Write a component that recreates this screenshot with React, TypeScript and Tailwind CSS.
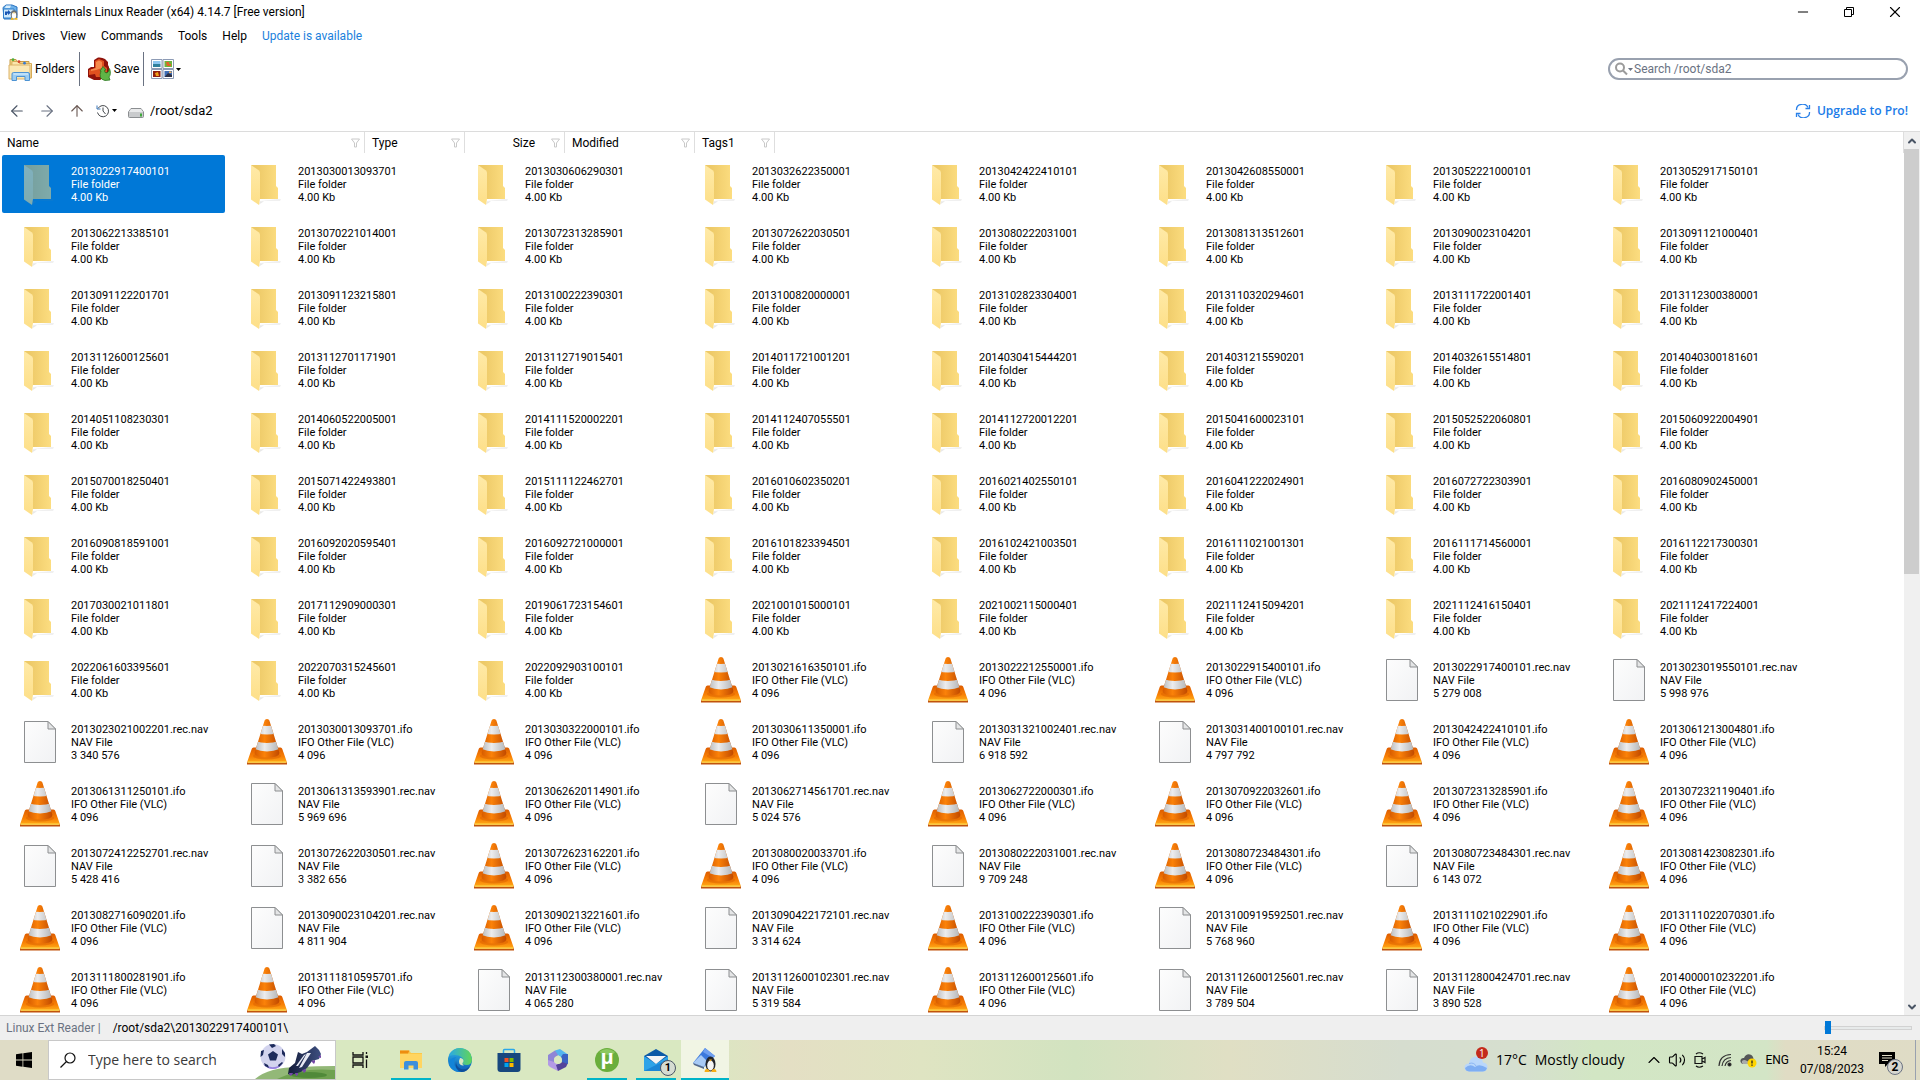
import { ArrowLeft, ArrowRight, ArrowUp, ChevronUp, Minus, Volume2, X } from 'lucide-react';
import type { ReactNode } from 'react';

type Kind = 'folder' | 'ifo' | 'nav';

interface Entry {
    name: string;
    kind: Kind;
    size: string;
}

const folderNames = `
2013022917400101 2013030013093701 2013030606290301 2013032622350001 2013042422410101 2013042608550001 2013052221000101 2013052917150101
2013062213385101 2013070221014001 2013072313285901 2013072622030501 2013080222031001 2013081313512601 2013090023104201 2013091121000401
2013091122201701 2013091123215801 2013100222390301 2013100820000001 2013102823304001 2013110320294601 2013111722001401 2013112300380001
2013112600125601 2013112701171901 2013112719015401 2014011721001201 2014030415444201 2014031215590201 2014032615514801 2014040300181601
2014051108230301 2014060522005001 2014111520002201 2014112407055501 2014112720012201 2015041600023101 2015052522060801 2015060922004901
2015070018250401 2015071422493801 2015111122462701 2016010602350201 2016021402550101 2016041222024901 2016072722303901 2016080902450001
2016090818591001 2016092020595401 2016092721000001 2016101823394501 2016102421003501 2016111021001301 2016111714560001 2016112217300301
2017030021011801 2017112909000301 2019061723154601 2021001015000101 2021002115000401 2021112415094201 2021112416150401 2021112417224001
2022061603395601 2022070315245601 2022092903100101
`.trim().split(/\s+/);

// A size marks a .rec.nav recording index, no size is a 4 096 byte .ifo
const files: [string, string?][] = [
    ['2013021616350101'], ['2013022212550001'], ['2013022915400101'],
    ['2013022917400101', '5 279 008'], ['2013023019550101', '5 998 976'],
    ['2013023021002201', '3 340 576'], ['2013030013093701'], ['2013030322000101'], ['2013030611350001'],
    ['2013031321002401', '6 918 592'], ['2013031400100101', '4 797 792'], ['2013042422410101'], ['2013061213004801'],
    ['2013061311250101'], ['2013061313593901', '5 969 696'], ['2013062620114901'], ['2013062714561701', '5 024 576'],
    ['2013062722000301'], ['2013070922032601'], ['2013072313285901'], ['2013072321190401'],
    ['2013072412252701', '5 428 416'], ['2013072622030501', '3 382 656'], ['2013072623162201'], ['2013080020033701'],
    ['2013080222031001', '9 709 248'], ['2013080723484301'], ['2013080723484301', '6 143 072'], ['2013081423082301'],
    ['2013082716090201'], ['2013090023104201', '4 811 904'], ['2013090213221601'], ['2013090422172101', '3 314 624'],
    ['2013100222390301'], ['2013100919592501', '5 768 960'], ['2013111021022901'], ['2013111022070301'],
    ['2013111800281901'], ['2013111810595701'], ['2013112300380001', '4 065 280'], ['2013112600102301', '5 319 584'],
    ['2013112600125601'], ['2013112600125601', '3 789 504'], ['2013112800424701', '3 890 528'], ['2014000010232201'],
];

const entries: Entry[] = [
    ...folderNames.map((name): Entry => ({ name, kind: 'folder', size: '4.00 Kb' })),
    ...files.map(([name, size]): Entry =>
        size ? { name: `${name}.rec.nav`, kind: 'nav', size } : { name: `${name}.ifo`, kind: 'ifo', size: '4 096' }
    ),
];

const typeLabel: Record<Kind, string> = {
    folder: 'File folder',
    ifo: 'IFO Other File (VLC)',
    nav: 'NAV File',
};

// Gradients shared by every icon on the page
function IconDefs() {
    return (
        <svg className="absolute size-0" aria-hidden="true">
            <defs>
                <linearGradient id="folder-back" x1="0" x2="1">
                    <stop offset="0.2" stopColor="#edc967" />
                    <stop offset="1" stopColor="#fcdd80" />
                </linearGradient>
                <linearGradient id="folder-flap" x1="0" x2="0" y1="0" y2="1">
                    <stop offset="0" stopColor="#ffeaa8" />
                    <stop offset="1" stopColor="#fddf88" />
                </linearGradient>
                <linearGradient id="cone-orange" gradientUnits="userSpaceOnUse" x1="12" x2="36" y1="0" y2="0">
                    <stop offset="0" stopColor="#d85d00" />
                    <stop offset="0.4" stopColor="#fb8209" />
                    <stop offset="1" stopColor="#c24b00" />
                </linearGradient>
                <linearGradient id="cone-white" gradientUnits="userSpaceOnUse" x1="12" x2="36" y1="0" y2="0">
                    <stop offset="0" stopColor="#b9bbbd" />
                    <stop offset="0.4" stopColor="#ececed" />
                    <stop offset="1" stopColor="#b3b5b7" />
                </linearGradient>
                <linearGradient id="cone-base" x1="0" x2="0" y1="0" y2="1">
                    <stop offset="0" stopColor="#dd5c00" />
                    <stop offset="0.6" stopColor="#f88005" />
                    <stop offset="1" stopColor="#ffab18" />
                </linearGradient>
                <clipPath id="cone-shape">
                    <path d="M21.6 2.5Q22 1 24 1Q26 1 26.4 2.5L36.5 35Q36 39.5 24 39.5Q12 39.5 11.5 35Z" />
                </clipPath>
                <linearGradient id="page-fill" x1="0" x2="1" y1="0" y2="1">
                    <stop offset="0" stopColor="#fdfdfd" />
                    <stop offset="1" stopColor="#f1f2f4" />
                </linearGradient>
                <linearGradient id="edge-blue" x1="0" x2="0" y1="0" y2="1">
                    <stop offset="0" stopColor="#2fb6e8" />
                    <stop offset="1" stopColor="#0c5bb5" />
                </linearGradient>
                <linearGradient id="edge-green" x1="0" x2="1">
                    <stop offset="0" stopColor="#2aa9e5" />
                    <stop offset="1" stopColor="#62d657" />
                </linearGradient>
                <linearGradient id="boot" x1="0" x2="1">
                    <stop offset="0" stopColor="#141c3a" />
                    <stop offset="1" stopColor="#3d4f80" />
                </linearGradient>
            </defs>
        </svg>
    );
}

function FolderIcon() {
    return (
        <svg viewBox="0 0 48 48" className="size-12">
            <path d="M17 40.5h20l1-1H35z" fill="#8a8a8a" opacity="0.25" />
            <path d="M16 44.6l5-3.4h-4z" fill="#8a8a8a" opacity="0.2" />
            <path d="M8 5H33V26L35 28V39H15Z" fill="url(#folder-back)" />
            <path d="M8 5L16 10.5Q17 11.5 17 13V39L16 45L8 39.5Z" fill="url(#folder-flap)" />
        </svg>
    );
}

function ConeIcon() {
    return (
        <svg viewBox="0 0 48 48" className="size-12">
            <path d="M10.5 29.5H37.5Q39 29.5 39.3 31L44 44.5H4L8.7 31Q9 29.5 10.5 29.5Z" fill="url(#cone-base)" />
            <path d="M4 44.5H44V46.5H4Z" fill="#c1530b" />
            <path d="M5 43.5H43V44.7H5Z" fill="#ffd84a" />
            <ellipse cx="24" cy="38" rx="14" ry="3.5" fill="#d95f00" opacity="0.5" />
            <g clipPath="url(#cone-shape)">
                <path d="M8 0H40V42H8Z" fill="url(#cone-orange)" />
                <path d="M17 7Q24 9 31 7L34 15Q24 18 14 15Z" fill="url(#cone-white)" />
                <path d="M12 23Q24 27 36 23L39 30Q24 37 9 30Z" fill="url(#cone-white)" />
            </g>
        </svg>
    );
}

function PageIcon() {
    return (
        <svg viewBox="0 0 48 48" className="size-12">
            <path d="M8.5 3.5H32L39.5 11V44.5H8.5Z" fill="url(#page-fill)" stroke="#8d8f91" />
            <path d="M32 3.5V11H39.5Z" fill="#e4e5e6" stroke="#8d8f91" />
        </svg>
    );
}

function EntryIcon({ kind }: { kind: Kind }) {
    if (kind === 'folder') return <FolderIcon />;
    if (kind === 'ifo') return <ConeIcon />;
    return <PageIcon />;
}

function AppLogo() {
    return (
        <svg viewBox="0 0 16 16" className="ml-0.5 size-4">
            <path d="M1 3.5L4 1H10L15 3V14L12 15H2Z" fill="#6db1ea" stroke="#2a73c0" />
            <path d="M4 1.5H9L8 4H3Z" fill="#d8eefc" />
            <path d="M1.5 5H12V14H1.5Z" fill="#cfe9fb" stroke="#2f7dca" />
            <path d="M3 11V7.5H6V6L9 8.5L6 11V9.5H5V11Z" fill="#1b57b4" />
            <ellipse cx="12" cy="10.5" rx="3.3" ry="4.3" fill="#6b7078" />
            <ellipse cx="12" cy="11.5" rx="2.2" ry="3.2" fill="#fff" />
            <path d="M9 14.5Q10 13 11.5 14.5V15.7H8.5ZM12.5 14.5Q14 13 15.5 14.5V15.7H12.5ZM11 8.5H13L12 9.8Z" fill="#f7b719" />
        </svg>
    );
}

function FoldersIcon() {
    return (
        <svg viewBox="0 0 24 24" className="size-6">
            <path d="M2 2.5H8L9.5 4.5H21V20H2Z" fill="#f3d58a" stroke="#c79a45" />
            <path d="M4 4.5H10L11.5 6.5H23.5V21H3Z" fill="#fae6ae" stroke="#d6ab57" />
            <path d="M1 8H22V22H1Z" fill="#fbe8b5" stroke="#dcb268" />
            <circle cx="5" cy="2.7" r="1.4" fill="#4fae3c" />
            <circle cx="11" cy="4.7" r="1.4" fill="#d8442c" />
            <circle cx="16.5" cy="6.2" r="1.4" fill="#3a7bd0" />
            <path d="M4 23.5V17Q4 15.5 5.5 15.5H20Q21.5 15.5 21.5 17V23.5H17V19.5H8.5V23.5Z" fill="#9ccdf2" stroke="#4d93d3" />
            <path d="M5.5 17H20" stroke="#e0f3ff" />
        </svg>
    );
}

function SaveIcon() {
    return (
        <svg viewBox="0 0 24 24" className="size-6">
            <path d="M7 3L11 0.5Q15 0 18 2L21 5V8L22 10V15L18 20L13 23L7 23L1 20V12L4 10H7Z" fill="#8f120b" />
            <path d="M8 4L12 2L17 4V9L20 11V15L15 16L14 20H9L8 17L2 18V13L8 11Z" fill="#e0501f" />
            <path d="M9 5L12 3.5L15 5V11L9 13L4 14V12.5L9 11Z" fill="#f58a4c" />
            <path d="M13 14L16 9.5L19 13H17.5Q17 16 20 16Q22 15 22.5 11.5Q24.5 17 22 20L23 23L18 23.5Q11 22 14 14Z" fill="#5fb446" stroke="#2c7a20" strokeWidth="0.8" />
        </svg>
    );
}

function ThumbnailsIcon() {
    return (
        <svg viewBox="0 0 23 20" className="h-5 w-[23px]">
            <path d="M0.5 0.5H11V9.5H0.5ZM12 0.5H22.5V9.5H12ZM0.5 10.5H11V19.5H0.5ZM12 10.5H22.5V19.5H12Z" fill="#fff" stroke="#8d9bb5" />
            <path d="M2 2H9.5V5H2Z" fill="#8cc6f0" />
            <path d="M2 5H9.5V8H2Z" fill="#2f7f9c" />
            <path d="M13.5 2H21V8H13.5Z" fill="#6db33e" />
            <path d="M15 3H18V5H20V7H16Z" fill="#e3622b" />
            <path d="M2 12H9.5V18H2Z" fill="#8e1d0e" />
            <path d="M4 14L7 13L8 17H5Z" fill="#f0a01c" />
            <path d="M13.5 12H21V18H13.5Z" fill="#3e6db5" />
            <path d="M13.5 18L17 14L21 16V18Z" fill="#2b2f45" />
            <path d="M18 12.5H20.5V14H18Z" fill="#f3b35a" />
        </svg>
    );
}

function HistoryIcon() {
    return (
        <svg viewBox="0 0 14 14" className="size-[14px]" fill="none" stroke="#45484c">
            <path d="M2 4.5A5.6 5.6 0 1 1 1.5 8.5" />
            <path d="M1 1.5V5H4.5" stroke="#3b76b8" />
            <path d="M7 3.5V7L9.5 10" />
        </svg>
    );
}

function DriveIcon() {
    return (
        <svg viewBox="0 0 16 10" className="h-[10px] w-4">
            <path d="M3 0.5H13L15.5 4V8.5Q15.5 9.5 14.5 9.5H1.5Q0.5 9.5 0.5 8.5V4Z" fill="#c9cbcd" stroke="#8b8e91" />
            <path d="M3 1H13L15 4H1Z" fill="#e9eaeb" />
            <path d="M12 5.5H14V8.5H12Z" fill="#3fa93a" />
        </svg>
    );
}

function Caret({ className = 'text-black' }: { className?: string }) {
    return (
        <svg viewBox="0 0 5 3" className={`h-[3px] w-[5px] ${className}`} fill="currentColor">
            <path d="M0 0H5L2.5 3Z" />
        </svg>
    );
}

function FilterIcon() {
    return (
        <svg viewBox="0 0 9 10" className="h-[10px] w-[9px] shrink-0" fill="none" stroke="#c9c9c9">
            <path d="M0.5 1H8.5L5.5 5V9H3.5V5Z" />
        </svg>
    );
}

function TitleBar() {
    return (
        <header className="flex h-6 items-center pr-0.5">
            <AppLogo />
            <h1 className="ml-1 flex-1">DiskInternals Linux Reader (x64) 4.14.7 [Free version]</h1>
            <button aria-label="Minimize" className="flex h-5 w-[46px] items-center justify-center">
                <Minus className="size-4" strokeWidth={1.5} />
            </button>
            <button aria-label="Restore" className="flex h-5 w-[46px] items-center justify-center">
                <svg viewBox="0 0 10 10" className="size-[10px]" fill="none" stroke="#000">
                    <path d="M2.5 2.5V0.5H9.5V7.5H7.5M0.5 2.5H7.5V9.5H0.5Z" />
                </svg>
            </button>
            <button aria-label="Close" className="flex h-5 w-[46px] items-center justify-center">
                <X className="size-[18px]" strokeWidth={1.5} />
            </button>
        </header>
    );
}

function MenuBar() {
    return (
        <nav className="flex h-6 items-center gap-[15px] pl-3">
            {['Drives', 'View', 'Commands', 'Tools', 'Help'].map((item) => (
                <button key={item}>{item}</button>
            ))}
            <a href="#update" className="text-[#1a7fdc]">Update is available</a>
        </nav>
    );
}

function Toolbar() {
    return (
        <div className="flex h-[42px] items-center pr-3 pl-2">
            <button className="flex h-[34px] items-center gap-[3px] border-r border-gray-500 pr-1">
                <FoldersIcon />
                Folders
            </button>
            <button className="flex h-[34px] items-center gap-[3px] border-r border-gray-500 pr-1 pl-[7px]">
                <SaveIcon />
                Save
            </button>
            <button aria-label="View mode" className="flex h-[34px] items-center gap-0.5 pl-[7px]">
                <ThumbnailsIcon />
                <Caret />
            </button>
            <div className="ml-auto flex h-[22px] w-[300px] items-center rounded-full border-2 border-gray-400 pl-1">
                <svg viewBox="0 0 14 14" className="size-[14px]" fill="none" stroke="#9b9b9b" strokeWidth="2">
                    <circle cx="6" cy="5.5" r="4" />
                    <path d="M9 8.5L13 12.5" />
                </svg>
                <Caret className="text-gray-500" />
                <input aria-label="Search /root/sda2" placeholder="Search /root/sda2" className="min-w-0 flex-1 bg-transparent pl-px outline-none placeholder:text-gray-500" />
            </div>
        </div>
    );
}

function AddressBar() {
    return (
        <div className="flex h-[42px] items-center border-b border-[#dcdcdc] pr-3 pl-2">
            <button aria-label="Back" className="w-[30px]"><ArrowLeft className="size-[18px] text-gray-600" strokeWidth={1.5} /></button>
            <button aria-label="Forward" className="w-[30px]"><ArrowRight className="size-[18px] text-gray-500" strokeWidth={1.5} /></button>
            <button aria-label="Up" className="w-7"><ArrowUp className="size-[18px] text-[#6b5a55]" strokeWidth={1.5} /></button>
            <button aria-label="History" className="flex items-center gap-0.5">
                <HistoryIcon />
                <Caret />
            </button>
            <span className="mt-1 ml-[11px]"><DriveIcon /></span>
            <input aria-label="Path" defaultValue="/root/sda2" className="ml-1.5 w-80 text-[13px] outline-none" />
            <a href="#upgrade" className="ml-auto flex items-center gap-1.5 font-['Open_Sans',sans-serif] font-semibold text-[#1a7be8]">
                <svg viewBox="0 0 16 14" className="h-[14px] w-4" fill="none" stroke="#2a80e8" strokeWidth="1.3">
                    <path d="M1.5 6A6 5.5 0 0 1 13 3.5M14.5 8A6 5.5 0 0 1 3 10.5" />
                    <path d="M14.5 1V4.5H10.5M1.5 13V9.5H5.5" />
                </svg>
                Upgrade to Pro!
            </a>
        </div>
    );
}

function ColumnHeader({ label, className }: { label: string; className: string }) {
    return (
        <button className={`flex h-full items-center border-r border-[#dedede] pr-1 pl-[7px] ${className}`}>
            <span className="flex-1">{label}</span>
            <FilterIcon />
        </button>
    );
}

function Tile({ entry, selected }: { entry: Entry; selected: boolean }) {
    return (
        <li className={`flex h-[58px] items-center gap-[7px] rounded-xs pl-[14px] whitespace-nowrap ${selected ? 'bg-[#0078d7] text-white' : ''}`}>
            <span className={selected ? 'shrink-0 opacity-50' : 'shrink-0'}>
                <EntryIcon kind={entry.kind} />
            </span>
            <div>
                <p>{entry.name}</p>
                <p>{typeLabel[entry.kind]}</p>
                <p>{entry.size}</p>
            </div>
        </li>
    );
}

function ScrollBar() {
    return (
        <div className="flex w-4 shrink-0 flex-col bg-[#f0f0f0]">
            <button aria-label="Scroll up" className="flex h-[17px] items-center justify-center">
                <ChevronUp className="size-3 text-gray-600" strokeWidth={4} />
            </button>
            <div className="mr-px flex-1">
                <div className="h-1/2 bg-[#cdcdcd]" />
            </div>
            <button aria-label="Scroll down" className="flex h-[17px] items-center justify-center">
                <ChevronUp className="size-3 rotate-180 text-gray-600" strokeWidth={4} />
            </button>
        </div>
    );
}

function FileList() {
    return (
        <main className="flex min-h-0 flex-1">
            <div className="flex min-w-0 flex-1 flex-col overflow-hidden">
                <div className="flex h-[21px] shrink-0 border-r border-[#dedede]">
                    <ColumnHeader label="Name" className="w-[365px] text-left" />
                    <ColumnHeader label="Type" className="w-[100px] text-left" />
                    <ColumnHeader label="Size" className="w-[100px] gap-4 text-right" />
                    <ColumnHeader label="Modified" className="w-[130px] text-left" />
                    <ColumnHeader label="Tags1" className="w-[80px] text-left" />
                </div>
                <ul className="grid grid-cols-[repeat(auto-fill,223px)] gap-1 px-0.5 pt-0.5 text-[11px] leading-[13px]">
                    {entries.map((entry, i) => (
                        <Tile key={`${entry.kind}-${entry.name}`} entry={entry} selected={i === 0} />
                    ))}
                </ul>
            </div>
            <ScrollBar />
        </main>
    );
}

function StatusBar() {
    return (
        <footer className="flex h-[25px] shrink-0 items-center border-t border-[#d4d4d4] bg-[#efefef] pr-2 pl-1.5">
            <span className="text-gray-500">Linux Ext Reader |</span>
            <span className="ml-3">/root/sda2\2013022917400101\</span>
            <input
                type="range"
                aria-label="Icon size"
                defaultValue={0}
                className="ml-auto h-[13px] w-[88px] appearance-none bg-transparent [&::-webkit-slider-runnable-track]:h-1 [&::-webkit-slider-runnable-track]:border [&::-webkit-slider-runnable-track]:border-[#d2d2d2] [&::-webkit-slider-runnable-track]:bg-[#e7eaea] [&::-webkit-slider-thumb]:-mt-[6px] [&::-webkit-slider-thumb]:h-[13px] [&::-webkit-slider-thumb]:w-1.5 [&::-webkit-slider-thumb]:appearance-none [&::-webkit-slider-thumb]:bg-[#0078d7]"
            />
        </footer>
    );
}

function FootballArt() {
    return (
        <svg viewBox="0 0 80 38" className="h-[38px] w-20 shrink-0">
            <path d="M0 38Q14 26 44 26Q62 25 80 25V38Z" fill="#93b878" />
            <path d="M22 38Q46 26 80 29V38Z" fill="#6fa150" />
            <ellipse cx="54" cy="34" rx="18" ry="3" fill="#3c7a2a" opacity="0.6" />
            <circle cx="18" cy="15.5" r="12.5" fill="#d3d4ee" />
            <path d="M8 23Q18 30 28 22Q24 28 18 28Q12 28 8 23Z" fill="#9884e0" />
            <path d="M18 10L23 13.5L21 19.5H15L13 13.5ZM14 3.5L19 3L21 5L17 7ZM6 10L9 9L8 14L5.5 16ZM27 8L30 12L30 16L27 13ZM9 22L13 24L14 27L10 25ZM23 24L27 21L28 22L24 26Z" fill="#1d2b5c" />
            <path d="M33 33L34 27L40 22L43 11L47 13L52 11L60 5L64 9L66 13L64 18L57 20L52 27L46 31L36 34Z" fill="url(#boot)" />
            <path d="M52 12L56 12L47 26L44 27ZM49 14L51 13L43 25L41 25Z" fill="#e8eaf4" />
            <path d="M34 32L35 35L37 34L38 32ZM47 29L49 32L51 30L51 28ZM56 20L59 23L60 21L60 19ZM40 32L41 35L43 34L43 32ZM63 16L66 17L66 14Z" fill="#7447a8" />
        </svg>
    );
}

function TaskButton({ label, open, active, children }: { label: string; open?: boolean; active?: boolean; children: ReactNode }) {
    return (
        <button aria-label={label} className={`flex h-10 w-12 flex-col items-center ${active ? 'bg-[#f1f5e4]' : ''}`}>
            <span className="flex flex-1 items-center pt-0.5">{children}</span>
            <span className={`h-0.5 ${active ? 'w-12' : 'w-10'} ${open ? 'bg-[#00b4c8]' : ''}`} />
        </button>
    );
}

function TaskButtons() {
    return (
        <div className="flex gap-px">
            <TaskButton label="Task View">
                <svg viewBox="0 0 17 16" className="h-4 w-[17px]" fill="none" stroke="#111" strokeWidth="1.3">
                    <path d="M1 0V3H11V0M1 16V13H11V16M1 5H11V11H1Z" />
                    <path d="M14.5 0V2M14.5 7.5V16" />
                    <path d="M13.5 3.5H16V6H13.5Z" fill="#111" stroke="none" />
                </svg>
            </TaskButton>
            <span className="w-px" />
            <TaskButton label="File Explorer" open>
                <svg viewBox="0 0 22 20" className="h-5 w-[22px]">
                    <path d="M0 1Q0 0.5 0.5 0.5H9L11 3H22V18H0Z" fill="#fbc94a" />
                    <path d="M0 0.5H9.5L8 3.5H0Z" fill="#ee8d0e" />
                    <path d="M0 4H22V18H0Z" fill="#ffd561" />
                    <path d="M4 19.5V13Q4 11 6 11H16Q18 11 18 13V19.5H13.5V15.5H8.5V19.5Z" fill="#3f8fdb" />
                </svg>
            </TaskButton>
            <TaskButton label="Edge">
                <svg viewBox="0 0 24 24" className="size-6">
                    <circle cx="12" cy="12" r="12" fill="url(#edge-blue)" />
                    <path d="M1 8Q4 0 12 0Q23 0.5 24 11Q24 17 18.5 17Q14 17 14.5 14Q16.5 12 14 9.5Q9 5.5 1 8Z" fill="url(#edge-green)" />
                    <path d="M8.5 9Q4 13 7.5 19Q10 23 15 23.6Q5 25.5 1 17Q0 10 8.5 9Z" fill="#1384d8" />
                    <path d="M8 13Q8 19 13 21Q18 22 22 18.5Q19 24 13.5 24Q6 22 8 13Z" fill="#0d4f9c" />
                    <path d="M12 10Q15 10 15.5 12.5Q15.5 14 14.5 15Q14 16.5 16 17.3Q13 18 11.3 15.5Q10.5 12.5 12 10Z" fill="#d9e8c1" />
                </svg>
            </TaskButton>
            <TaskButton label="Store">
                <svg viewBox="0 0 24 24" className="size-6">
                    <path d="M6.500 6V2.5Q6.500 1.5 7.500 1.5H16.500Q17.500 1.5 17.500 2.5V6" fill="none" stroke="#2aa7ea" strokeWidth="1.5" />
                    <path d="M0.5 5H23.5V21Q23.5 24 20.5 24H3.5Q0.5 24 0.5 21Z" fill="#17477e" />
                    <path d="M7.5 10H11.5V14H7.5Z" fill="#f25022" />
                    <path d="M12.5 10H16.5V14H12.5Z" fill="#7fba00" />
                    <path d="M7.5 15H11.5V19H7.5Z" fill="#00a4ef" />
                    <path d="M12.5 15H16.5V19H12.5Z" fill="#ffb900" />
                </svg>
            </TaskButton>
            <TaskButton label="Microsoft 365">
                <svg viewBox="0 0 22 22" className="size-[22px]">
                    <path d="M8 1.5L13 0L21 5.5V9L15 9L11 6L6 9Z" fill="#55b5ee" />
                    <path d="M8 1.5L11 6L7.5 9L7 15L1 12V6Z" fill="#8f86d6" />
                    <path d="M1 11L7 13L12 15.5L11 22L3 18L1 16Z" fill="#b39ae6" />
                    <path d="M21 14L19 18L11 22L9 16L14.5 13.5L15 11Z" fill="#53439a" />
                    <path d="M21 5V15L15 13L14 8L16 5Z" fill="#3b63c4" />
                    <circle cx="11" cy="11" r="4" fill="#d9e8c1" />
                </svg>
            </TaskButton>
            <TaskButton label="uTorrent" open>
                <svg viewBox="0 0 24 24" className="size-6 overflow-visible">
                    <circle cx="12" cy="12" r="12" fill="#6aae3c" />
                    <path d="M4 4Q12 -2 20 4Q16 10 4 4Z" fill="#8cc860" />
                    <text x="12" y="16" textAnchor="middle" fontSize="20" fontWeight="bold" fill="#fff" fontFamily="Open Sans, sans-serif">µ</text>
                </svg>
            </TaskButton>
            <TaskButton label="Mail" open>
                <span className="relative">
                    <svg viewBox="0 0 24 22" className="h-[22px] w-6">
                        <path d="M0 7L12 0L24 7V22H0Z" fill="#0d5aa7" />
                        <path d="M0 7L12 15L24 7V22H0Z" fill="#2ea3e8" />
                        <path d="M2 7H22L12 15Z" fill="#f6f6f6" />
                        <path d="M0 22L24 10V22Z" fill="#1b86d6" />
                    </svg>
                    <span className="absolute top-[11px] left-4 flex size-4 items-center justify-center rounded-full border border-gray-600 bg-[#d5dcd2] text-[11px] font-bold">1</span>
                </span>
            </TaskButton>
            <TaskButton label="DiskInternals Linux Reader" open active>
                <svg viewBox="0 0 24 24" className="size-6">
                    <path d="M12 0L22 8L11 19L0 15Z" fill="#3b78dc" />
                    <path d="M12 0L22 8L20 10L10 4Z" fill="#6f9ff0" />
                    <path d="M0 15L8 7L14 13L11 19Z" fill="#a8caf5" />
                    <path d="M0 15L11 19V21L1 17Z" fill="#546a8e" />
                    <ellipse cx="17.5" cy="16" rx="5" ry="7.5" fill="#23252b" />
                    <ellipse cx="17.5" cy="17.5" rx="3.3" ry="5" fill="#f5f5f5" />
                    <path d="M16 11.5H19L17.5 13.5ZM12 22Q14 20 16.5 22.5V24H11.5ZM18.5 22.5Q21 20 23 22L23.5 24H18.5Z" fill="#f6ae17" />
                </svg>
            </TaskButton>
        </div>
    );
}

function Tray() {
    return (
        <div className="ml-auto flex h-full items-center">
            <button className="flex items-center gap-2 font-['Open_Sans',sans-serif] text-sm">
                <span className="relative">
                    <svg viewBox="0 0 24 17" className="mt-1.5 h-[17px] w-6">
                        <path d="M5 16.5Q0.5 16 0.5 12Q1 8.5 5 8.5Q6 2 12 1.5Q18 2 19 7.5Q23.5 8 23.5 12Q23 16.5 18.5 16.5Z" fill="#b9d7fb" />
                        <path d="M1 13Q6 8 11 12Q15 8 23 13Q22 16.5 18.5 16.5H5Q1.5 16 1 13Z" fill="#7eaef3" />
                        <path d="M5 8.5Q10 7 12 11" fill="none" stroke="#8bb6f4" />
                    </svg>
                    <span className="absolute -top-0.5 left-3 flex size-3 items-center justify-center rounded-full bg-[#c42b1c] text-[10px] leading-none text-white">1</span>
                </span>
                <span>17°C</span>
                <span>Mostly cloudy</span>
            </button>
            <button aria-label="Show hidden icons" className="ml-5"><ChevronUp className="size-5" strokeWidth={1.3} /></button>
            <button aria-label="Volume" className="ml-1"><Volume2 className="size-[18px]" strokeWidth={1.5} /></button>
            <button aria-label="Meet Now" className="ml-2">
                <svg viewBox="0 0 12 16" className="h-4 w-3" fill="none" stroke="#111" strokeWidth="1.2">
                    <path d="M1 4.5H8V11.5H1ZM8 7L11 5.5V10.5L8 9M2 2Q5 -0.5 9 2M2 14Q5 16.5 9 14" />
                </svg>
            </button>
            <button aria-label="Network" className="ml-3">
                <svg viewBox="0 0 14 14" className="size-[14px]" fill="none" stroke="#333" strokeWidth="1.2">
                    <path d="M1 13Q1.5 2 13 1.5M4 13Q5 5 13 4.5M7 13Q8 8 13 7.5" />
                    <circle cx="11.5" cy="11.5" r="1.5" fill="#111" />
                </svg>
            </button>
            <button aria-label="OneDrive" className="ml-2">
                <svg viewBox="0 0 17 15" className="h-[15px] w-[17px]">
                    <path d="M3 11Q0 10 0.5 7Q1.5 4.5 4 5Q6 0.5 10 1.5Q13 2 13.5 6Q16 7 15 11Z" fill="#555759" />
                    <path d="M3 11Q1 10 2 8Q4 6 7 8L13 11Z" fill="#a9abac" />
                    <circle cx="12" cy="10" r="4.5" fill="#ffd500" />
                    <path d="M12 7.5V10.5M12 11.5V12.8" stroke="#222" strokeWidth="1.3" />
                </svg>
            </button>
            <button className="ml-2">ENG</button>
            <button className="flex h-full w-[86px] flex-col items-center justify-center gap-0.5 leading-4">
                <time>15:24</time>
                <time>07/08/2023</time>
            </button>
            <button aria-label="Notifications" className="relative mr-2.5 ml-1 flex h-full w-[26px] items-center">
                <svg viewBox="0 0 16 16" className="size-4">
                    <path d="M0 0H16V12H9L6 15V12H0Z" fill="#000" />
                    <path d="M3 3.5H13M3 6H13M3 8.5H9" stroke="#e0dcc6" />
                </svg>
                <span className="absolute top-[19px] left-2 flex size-4 items-center justify-center rounded-full border border-gray-500 bg-[#d6d6cf] font-bold">2</span>
            </button>
            <button aria-label="Show desktop" className="h-full w-[5px] border-l border-gray-400" />
        </div>
    );
}

function Taskbar() {
    return (
        <div className="flex h-10 shrink-0 items-center bg-[linear-gradient(to_right,#dfdcc6_0%,#dfdcc6_3%,#d9e8c1_12%,#d9e8c1_36%,#e4dfc4_41%,#dfe4c2_48%,#d2e3c0_56%,#e0dfc4_64%,#d6ddcf_73%,#d6dfcf_79%,#d2e6c4_83%,#d3e5c6_92%,#e0dcc4_93%,#dfdcc6_100%)]">
            <button aria-label="Start" className="flex h-full w-12 items-center justify-center">
                <svg viewBox="0 0 16 16" className="size-4">
                    <path d="M0 2.3L6.5 1.3V7.6H0ZM7.3 1.2L16 0V7.6H7.3ZM0 8.4H6.5V14.7L0 13.8ZM7.3 8.4H16V16L7.3 14.8Z" />
                </svg>
            </button>
            <div className="flex h-full w-72 items-center overflow-hidden border border-[#c8c8c8] bg-white pl-[11px]">
                <svg viewBox="0 0 16 16" className="size-4 shrink-0" fill="none" stroke="#111" strokeWidth="1.2">
                    <circle cx="10" cy="6" r="5" />
                    <path d="M6.5 9.5L0.5 15.5" />
                </svg>
                <input aria-label="Type here to search" placeholder="Type here to search" className="ml-3 min-w-0 flex-1 font-['Open_Sans',sans-serif] text-sm outline-none placeholder:text-[#3a3a3a]" />
                <FootballArt />
            </div>
            <TaskButtons />
            <Tray />
        </div>
    );
}

export default function App() {
    return (
        <div className="flex h-screen flex-col overflow-hidden bg-white font-['Roboto',sans-serif] text-xs text-black">
            <IconDefs />
            <TitleBar />
            <MenuBar />
            <Toolbar />
            <AddressBar />
            <FileList />
            <StatusBar />
            <Taskbar />
        </div>
    );
}
